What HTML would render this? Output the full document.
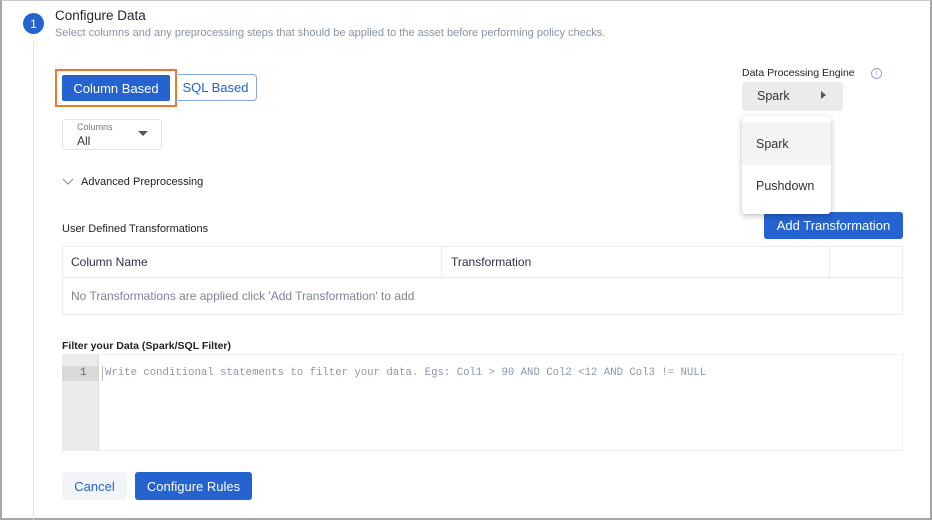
<!DOCTYPE html>
<html><head><style>
*{box-sizing:border-box;margin:0;padding:0}
body{width:932px;height:520px;overflow:hidden;background:#fff;font-family:"Liberation Sans",sans-serif;position:relative;color:#1f2430}
.frame{position:absolute;left:0;top:0;width:932px;height:520px;border:2px solid #a5a5a5;border-top:1px solid #c8c8c8}
.abs{position:absolute}
.btn{position:absolute;border-radius:4px;font-size:13px;display:flex;align-items:center;justify-content:center}
</style></head><body>
<div class="frame"></div>
<div class="abs" style="left:23px;top:13px;width:21px;height:21px;border-radius:50%;background:#2563d0;color:#fff;font-size:12px;display:flex;align-items:center;justify-content:center">1</div>
<div class="abs" style="left:33px;top:42px;width:1px;height:478px;background:#e4e4e4"></div>
<div class="abs" style="left:55px;top:8px;font-size:13.5px;color:#1f2430">Configure Data</div>
<div class="abs" style="left:55px;top:27px;font-size:11px;color:#8a93a6">Select columns and any preprocessing steps that should be applied to the asset before performing policy checks.</div>

<div class="abs" style="left:55px;top:69px;width:122px;height:38px;border:2px solid #e8792f"></div>
<div class="btn" style="left:62px;top:75px;width:108px;height:26px;background:#2563d0;color:#fff;border-radius:2px">Column Based</div>
<div class="btn" style="left:175px;top:74px;width:82px;height:27px;border:1px solid #8aa8e0;color:#2563d0;border-left:none;border-radius:0 4px 4px 0">SQL Based</div>

<div class="abs" style="left:62px;top:119px;width:100px;height:31px;border:1px solid #e6e6e6;border-radius:3px"></div>
<div class="abs" style="left:77px;top:122px;font-size:9px;color:#777">Columns</div>
<div class="abs" style="left:77px;top:134px;font-size:12px;color:#333">All</div>
<div class="abs" style="left:138px;top:131px;width:0;height:0;border-left:5px solid transparent;border-right:5px solid transparent;border-top:5px solid #555"></div>

<svg class="abs" style="left:62px;top:178px" width="12" height="8"><path d="M1 1 L6 6 L11 1" stroke="#888" fill="none" stroke-width="1"/></svg>
<div class="abs" style="left:81px;top:176px;font-size:11px;color:#222">Advanced Preprocessing</div>

<div class="abs" style="left:742px;top:67px;font-size:10.5px;color:#222">Data Processing Engine</div>
<div class="abs" style="left:871px;top:68px;width:11px;height:11px;border:1px solid #9aa7c6;border-radius:50%;font-size:7px;color:#9aa7c6;text-align:center;line-height:9px">i</div>
<div class="abs" style="left:742px;top:82px;width:101px;height:29px;background:#ebebeb;border-radius:4px"></div>
<div class="abs" style="left:757px;top:89px;font-size:12.5px;color:#333">Spark</div>
<div class="abs" style="left:821px;top:91px;width:0;height:0;border-top:4px solid transparent;border-bottom:4px solid transparent;border-left:5px solid #555"></div>

<div class="abs" style="left:764px;top:212px;width:139px;height:27px;background:#2563d0;border-radius:3px;color:#fff;font-size:13px;display:flex;align-items:center;justify-content:center">Add Transformation</div>

<div class="abs" style="left:742px;top:116px;width:89px;height:98px;background:#fff;border-radius:4px;box-shadow:0 2px 6px rgba(0,0,0,.25)"></div>
<div class="abs" style="left:742px;top:122px;width:89px;height:43px;background:#f4f4f4"></div>
<div class="abs" style="left:756px;top:137px;font-size:12.5px;color:#333">Spark</div>
<div class="abs" style="left:756px;top:179px;font-size:12.5px;color:#333">Pushdown</div>

<div class="abs" style="left:62px;top:223px;font-size:11px;color:#222">User Defined Transformations</div>
<div class="abs" style="left:62px;top:246px;width:841px;height:69px;border:1px solid #ececec"></div>
<div class="abs" style="left:62px;top:277px;width:841px;height:1px;background:#ececec"></div>
<div class="abs" style="left:441px;top:246px;width:1px;height:31px;background:#ececec"></div>
<div class="abs" style="left:829px;top:246px;width:1px;height:31px;background:#ececec"></div>
<div class="abs" style="left:71px;top:255px;font-size:12px;color:#2a3350">Column Name</div>
<div class="abs" style="left:451px;top:255px;font-size:12px;color:#2a3350">Transformation</div>
<div class="abs" style="left:71px;top:289px;font-size:12px;color:#7d849a">No Transformations are applied click 'Add Transformation' to add</div>

<div class="abs" style="left:62px;top:340px;font-size:10.5px;color:#222;font-weight:bold">Filter your Data (Spark/SQL Filter)</div>
<div class="abs" style="left:62px;top:354px;width:841px;height:97px;border:1px solid #efefef"></div>
<div class="abs" style="left:62px;top:354px;width:37px;height:97px;background:#ebebeb;border-right:1px solid #ddd"></div>
<div class="abs" style="left:62px;top:366px;width:37px;height:15px;background:#d9d9d9"></div>
<div class="abs" style="left:80px;top:367px;font-family:'Liberation Mono',monospace;font-size:11px;color:#666">1</div>
<div class="abs" style="left:102px;top:366px;width:1px;height:15px;background:#bbb"></div>
<div class="abs" style="left:105px;top:367px;font-family:'Liberation Mono',monospace;font-size:10.66px;color:#8e96ad;white-space:pre">Write conditional statements to filter your data. Egs: Col1 &gt; 90 AND Col2 &lt;12 AND Col3 != NULL</div>

<div class="btn" style="left:62px;top:472px;width:65px;height:28px;background:#f3f4f7;color:#2563d0">Cancel</div>
<div class="btn" style="left:135px;top:472px;width:117px;height:28px;background:#2563d0;color:#fff;border-radius:3px">Configure Rules</div>
</body></html>
